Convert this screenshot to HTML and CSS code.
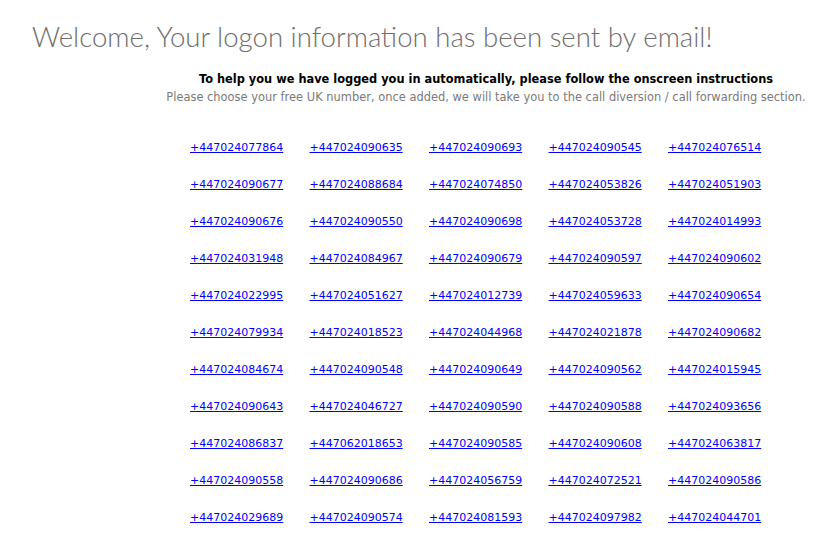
FILE: index.html
```html
<!DOCTYPE html>
<html lang="en">
<head>
  <meta charset="UTF-8" />
  <title>Choose your number</title>
  <link rel="stylesheet" href="styles.css">
</head>
<body>

  <!-- Titulo -->
  <h1 class="bienvenida">Welcome, Your logon information has been sent by email!</h1>

  <div class="contenido">
    <p class="ayuda">To help you we have logged you in automatically, please follow the onscreen instructions</p>
    <p class="nota">Please choose your free UK number, once added, we will take you to the call diversion / call forwarding section.</p>

    <!-- Numeros -->
    <div class="numeros">
      <a href="#">+447024077864</a>
      <a href="#">+447024090635</a>
      <a href="#">+447024090693</a>
      <a href="#">+447024090545</a>
      <a href="#">+447024076514</a>

      <a href="#">+447024090677</a>
      <a href="#">+447024088684</a>
      <a href="#">+447024074850</a>
      <a href="#">+447024053826</a>
      <a href="#">+447024051903</a>

      <a href="#">+447024090676</a>
      <a href="#">+447024090550</a>
      <a href="#">+447024090698</a>
      <a href="#">+447024053728</a>
      <a href="#">+447024014993</a>

      <a href="#">+447024031948</a>
      <a href="#">+447024084967</a>
      <a href="#">+447024090679</a>
      <a href="#">+447024090597</a>
      <a href="#">+447024090602</a>

      <a href="#">+447024022995</a>
      <a href="#">+447024051627</a>
      <a href="#">+447024012739</a>
      <a href="#">+447024059633</a>
      <a href="#">+447024090654</a>

      <a href="#">+447024079934</a>
      <a href="#">+447024018523</a>
      <a href="#">+447024044968</a>
      <a href="#">+447024021878</a>
      <a href="#">+447024090682</a>

      <a href="#">+447024084674</a>
      <a href="#">+447024090548</a>
      <a href="#">+447024090649</a>
      <a href="#">+447024090562</a>
      <a href="#">+447024015945</a>

      <a href="#">+447024090643</a>
      <a href="#">+447024046727</a>
      <a href="#">+447024090590</a>
      <a href="#">+447024090588</a>
      <a href="#">+447024093656</a>

      <a href="#">+447024086837</a>
      <a href="#">+447062018653</a>
      <a href="#">+447024090585</a>
      <a href="#">+447024090608</a>
      <a href="#">+447024063817</a>

      <a href="#">+447024090558</a>
      <a href="#">+447024090686</a>
      <a href="#">+447024056759</a>
      <a href="#">+447024072521</a>
      <a href="#">+447024090586</a>

      <a href="#">+447024029689</a>
      <a href="#">+447024090574</a>
      <a href="#">+447024081593</a>
      <a href="#">+447024097982</a>
      <a href="#">+447024044701</a>
    </div>
  </div>

</body>
</html>
```

FILE: styles.css
```css
* {
  margin: 0;
  padding: 0;
  box-sizing: border-box;
}

body {
  font-family: "DejaVu Sans", Verdana, sans-serif;
  background-color: #fff;
  color: #000;
}

/* Titulo */
.bienvenida {
  font-family: "Lato", "DejaVu Sans", sans-serif;
  font-weight: 300;
  font-size: 27.6px;
  color: #6e6e6e;
  padding: 19px 0 0 32px;
  line-height: 36px;
}

/* Bloque central */
.contenido {
  margin-left: 160px;
  width: 652px;
  text-align: center;
}

.ayuda {
  font-weight: bold;
  font-size: 11.4px;
  margin-top: 16px;
  line-height: 16px;
}

.nota {
  font-size: 11.45px;
  color: #7a7a7a;
  line-height: 16px;
  margin-top: 2px;
}

/* Tabla de numeros */
.numeros {
  display: grid;
  grid-template-columns: repeat(5, 119.5px);
  row-gap: 21px;
  margin: 35px 0 0 30px;
  text-align: left;
  font-size: 11px;
  line-height: 16px;
}

.numeros a {
  color: #0000ff;
}
```
